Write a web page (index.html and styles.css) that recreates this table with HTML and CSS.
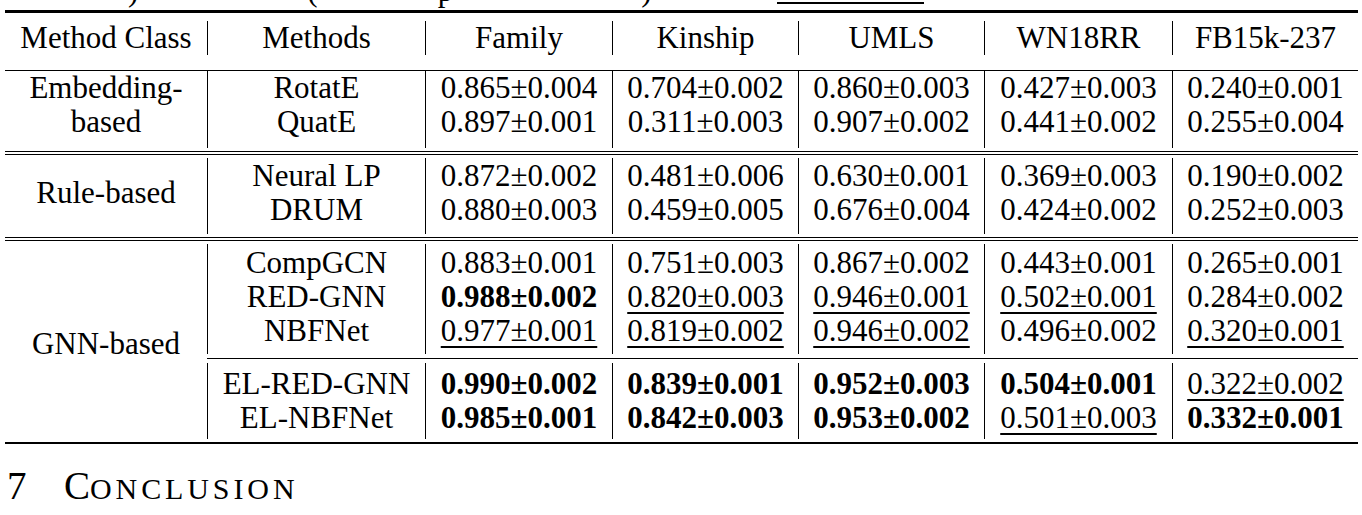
FILE: index.html
```html
<!DOCTYPE html>
<html lang="en">
<head>
<meta charset="utf-8">
<title>Results table</title>
<link rel="stylesheet" href="styles.css">
</head>
<body>
<div class="page">
  <div class="caption-tail">
    <span class="ct ct1">)</span>
    <span class="ct ct2">(</span>
    <span class="ct ct3">p</span>
    <span class="ct ct4">)</span>
    <span class="ct-under"></span>
  </div>

  <div class="tbl">
    <div class="rule rule-top"></div>

    <div class="cell col1 head">Method Class</div>
    <div class="cell bar head">Methods</div>
    <div class="cell bar head">Family</div>
    <div class="cell bar head">Kinship</div>
    <div class="cell bar head">UMLS</div>
    <div class="cell bar head">WN18RR</div>
    <div class="cell bar head">FB15k-237</div>

    <div class="rule rule-mid"></div>

    <div class="cell col1 g-emb">Embedding-<br>based</div>
    <div class="cell bar g-emb">RotatE<br>QuatE</div>
    <div class="cell bar g-emb">0.865±0.004<br>0.897±0.001</div>
    <div class="cell bar g-emb">0.704±0.002<br>0.311±0.003</div>
    <div class="cell bar g-emb">0.860±0.003<br>0.907±0.002</div>
    <div class="cell bar g-emb">0.427±0.003<br>0.441±0.002</div>
    <div class="cell bar g-emb">0.240±0.001<br>0.255±0.004</div>

    <div class="rule rule-dbl"></div>

    <div class="cell col1 mid g-rule">Rule-based</div>
    <div class="cell bar g-rule">Neural LP<br>DRUM</div>
    <div class="cell bar g-rule">0.872±0.002<br>0.880±0.003</div>
    <div class="cell bar g-rule">0.481±0.006<br>0.459±0.005</div>
    <div class="cell bar g-rule">0.630±0.001<br>0.676±0.004</div>
    <div class="cell bar g-rule">0.369±0.003<br>0.424±0.002</div>
    <div class="cell bar g-rule">0.190±0.002<br>0.252±0.003</div>

    <div class="rule rule-dbl"></div>

    <div class="cell col1 mid gnn-label">GNN-based</div>
    <div class="cell bar g-gnn1">CompGCN<br>RED-GNN<br>NBFNet</div>
    <div class="cell bar g-gnn1">0.883±0.001<br><b>0.988±0.002</b><br><u>0.977±0.001</u></div>
    <div class="cell bar g-gnn1">0.751±0.003<br><u>0.820±0.003</u><br><u>0.819±0.002</u></div>
    <div class="cell bar g-gnn1">0.867±0.002<br><u>0.946±0.001</u><br><u>0.946±0.002</u></div>
    <div class="cell bar g-gnn1">0.443±0.001<br><u>0.502±0.001</u><br>0.496±0.002</div>
    <div class="cell bar g-gnn1">0.265±0.001<br>0.284±0.002<br><u>0.320±0.001</u></div>

    <div class="rule rule-cmid"></div>

    <div class="cell bar g-gnn2">EL-RED-GNN<br>EL-NBFNet</div>
    <div class="cell bar g-gnn2"><b>0.990±0.002</b><br><b>0.985±0.001</b></div>
    <div class="cell bar g-gnn2"><b>0.839±0.001</b><br><b>0.842±0.003</b></div>
    <div class="cell bar g-gnn2"><b>0.952±0.003</b><br><b>0.953±0.002</b></div>
    <div class="cell bar g-gnn2"><b>0.504±0.001</b><br><u>0.501±0.003</u></div>
    <div class="cell bar g-gnn2"><u>0.322±0.002</u><br><b>0.332±0.001</b></div>

    <div class="rule rule-bottom"></div>
  </div>

  <h2 class="section"><span class="sec-num">7</span><span class="sec-title">C<span class="sc">ONCLUSION</span></span></h2>
</div>
</body>
</html>
```

FILE: styles.css
```css
html, body {
  margin: 0;
  padding: 0;
  background: #fff;
}

body {
  font-family: "Liberation Serif", "Times New Roman", serif;
  color: #000;
  width: 1362px;
  height: 515px;
  overflow: hidden;
}

.page {
  padding: 0 4px 0 5px;
}

/* bottom fragments of the caption line that is cut off at the top */
.caption-tail {
  display: flex;
  align-items: flex-start;
  height: 10px;
  overflow: hidden;
  font-size: 31px;
}

.ct {
  line-height: 34px;
  margin-top: -26px;
}

.ct1 { margin-left: 123px; }
.ct2 { margin-left: 169px; }
.ct3 { margin-left: 120px; }
.ct4 { margin-left: 188px; }

.ct-under {
  margin-left: 126px;
  width: 147px;
  height: 2px;
  border-bottom: 2px solid #000;
}

/* table */
.tbl {
  display: grid;
  grid-template-columns: 202px 218px 187px 186px 186px 188px 186px;
  font-size: 31px;
  line-height: 34px;
}

.cell {
  text-align: center;
  white-space: nowrap;
}

.bar {
  border-left: 1px solid #000;
}

.col1 {
  grid-column: 1;
}

.mid {
  display: flex;
  align-items: center;
  justify-content: center;
}

.rule {
  grid-column: 1 / -1;
  background: #000;
}

.rule-top {
  height: 3px;
  margin-bottom: 8px;
}

.rule-mid {
  height: 1px;
  margin-top: 15px;
}

.rule-dbl {
  height: 2px;
  background: #fff;
  border-top: 1px solid #000;
  border-bottom: 1px solid #000;
  margin: 3px 0;
}

.rule-cmid {
  grid-column: 2 / -1;
  height: 1px;
  margin: 4px 0;
}

.rule-bottom {
  height: 2px;
  margin-top: 3px;
}

.g-emb {
  padding: 0 0 9px;
}

.g-rule {
  padding: 1px 0 7px;
}

.g-gnn1 {
  padding: 2px 0 6px;
}

.g-gnn2 {
  padding: 4px 0 4px;
}

.gnn-label {
  grid-row: span 3;
  padding-top: 4px;
}

b {
  font-weight: bold;
}

u {
  text-decoration: underline;
  text-decoration-thickness: 1.5px;
  text-underline-offset: 5px;
}

/* section heading */
.section {
  margin: 21px 0 0 2px;
  font-weight: normal;
  font-size: 39px;
  line-height: 42px;
  display: flex;
  align-items: baseline;
}

.sec-num {
  width: 57px;
}

.sec-title {
  font-size: 39px;
}

.sc {
  font-size: 30px;
  letter-spacing: 3.9px;
}
```
